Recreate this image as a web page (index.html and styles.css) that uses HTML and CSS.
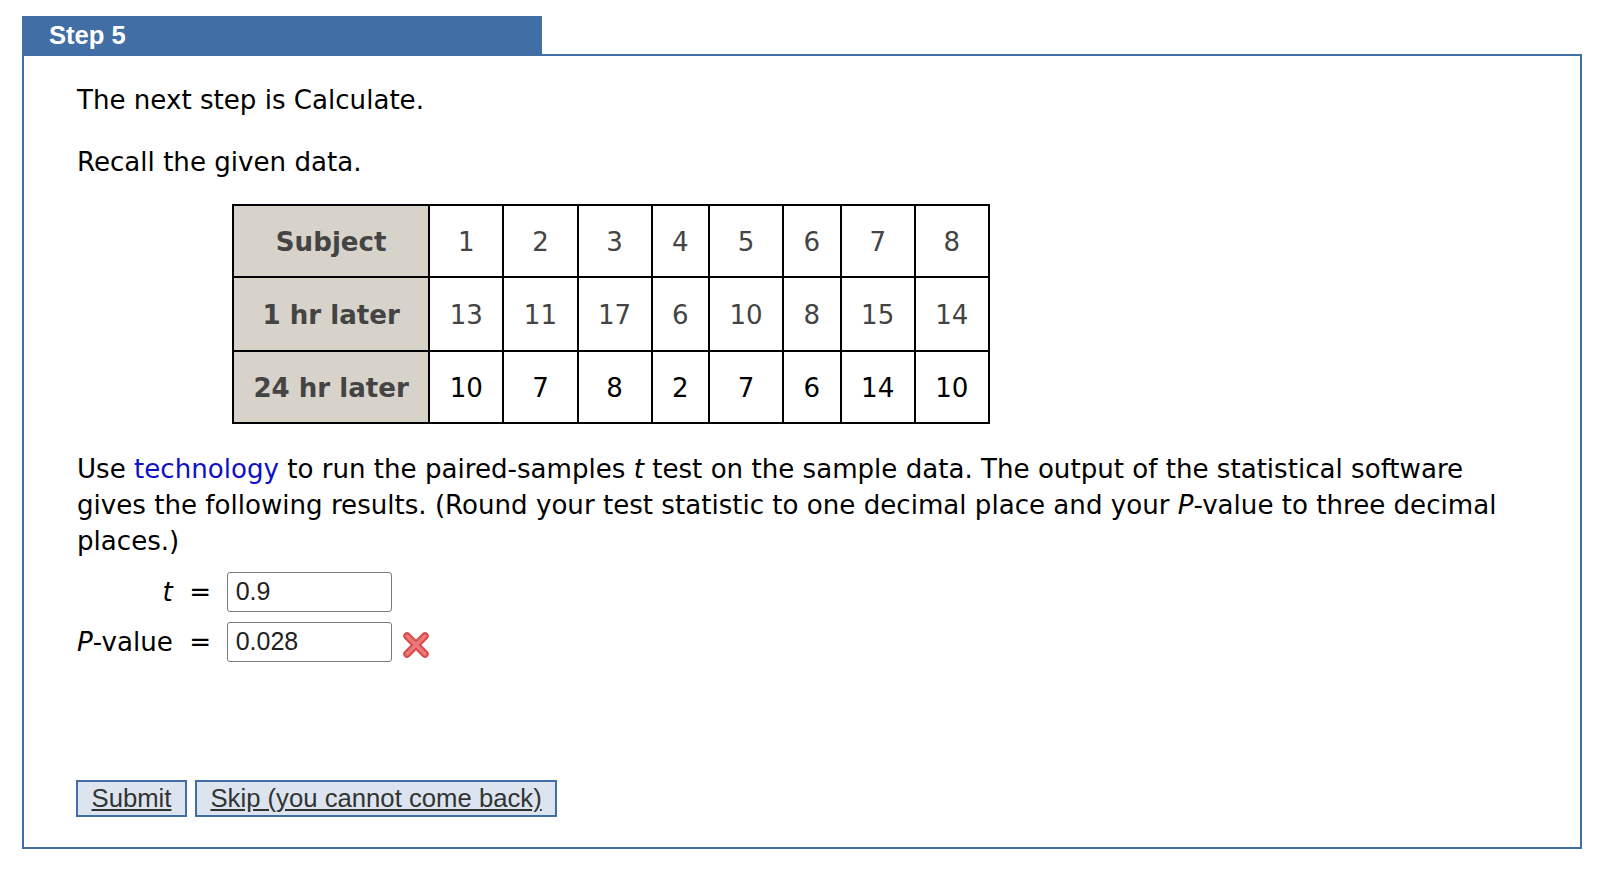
FILE: index.html
```html
<!DOCTYPE html>
<html lang="en">
<head>
<meta charset="utf-8">
<title>Step 5</title>
<link rel="stylesheet" href="styles.css">
</head>
<body>
<div class="page">
  <div class="step-header">Step 5</div>
  <div class="step-box">
    <p class="para first">The next step is Calculate.</p>
    <p class="para second">Recall the given data.</p>
    <table class="data">
      <tr class="r-gray">
        <th>Subject</th><td>1</td><td>2</td><td>3</td><td>4</td><td>5</td><td>6</td><td>7</td><td>8</td>
      </tr>
      <tr class="r-gray r-mid">
        <th>1 hr later</th><td>13</td><td>11</td><td>17</td><td>6</td><td>10</td><td>8</td><td>15</td><td>14</td>
      </tr>
      <tr class="r-black">
        <th>24 hr later</th><td>10</td><td>7</td><td>8</td><td>2</td><td>7</td><td>6</td><td>14</td><td>10</td>
      </tr>
    </table>
    <p class="para task">Use <a class="tech" href="#">technology</a> to run the paired-samples <i>t</i> test on the sample data. The output of the statistical software gives the following results. (Round your test statistic to one decimal place and your <i>P</i>-value to three decimal places.)</p>
    <div class="answers">
      <span class="lbl"><i>t</i></span>
      <span class="eq">=</span>
      <input class="ans" type="text" value="0.9">
      <span class="mark"></span>
      <span class="lbl"><i>P</i>-value</span>
      <span class="eq">=</span>
      <input class="ans" type="text" value="0.028">
      <span class="mark">
        <svg class="xmark" width="28" height="28" viewBox="0 0 28 28" aria-label="incorrect">
          <g stroke-linecap="round">
            <path d="M5 5 L23 23 M23 5 L5 23" stroke="#d94c4c" stroke-width="7.5"/>
            <path d="M5 5 L23 23 M23 5 L5 23" stroke="#ec7a7a" stroke-width="3.5"/>
          </g>
        </svg>
      </span>
    </div>
    <div class="buttons">
      <button class="btn" type="button">Submit</button>
      <button class="btn" type="button">Skip (you cannot come back)</button>
    </div>
  </div>
</div>
</body>
</html>
```

FILE: styles.css
```css
html, body {
  margin: 0;
  padding: 0;
  background: #ffffff;
}

.page {
  padding: 16px 0 0 22px;
  font-family: "DejaVu Sans", Verdana, sans-serif;
  font-size: 26.1px;
  line-height: 36px;
  color: #000;
}

.step-header {
  width: 493px;
  height: 38px;
  padding-left: 27px;
  background: #416ea5;
  color: #fff;
  font-family: "Liberation Sans", Arial, sans-serif;
  font-weight: bold;
  font-size: 25.6px;
  line-height: 38px;
}

.step-box {
  box-sizing: border-box;
  width: 1560px;
  border: 2px solid #416ea5;
  padding: 25.5px 52px 30px 53px;
}

.para {
  margin: 0 0 26px 0;
}

.second {
  margin-bottom: 24.5px;
}

.tech {
  color: #0f0fc8;
  text-decoration: none;
}

.data {
  border-collapse: collapse;
  margin: 0 0 27px 155px;
  color: #444;
}

.data th,
.data td {
  border: 2px solid #000;
  padding: 18.3px 19.45px 15.7px;
  text-align: center;
  line-height: 36px;
}

.data .r-mid th,
.data .r-mid td {
  padding-top: 19.3px;
  padding-bottom: 16.7px;
}

.data th {
  background: #d7d3ca;
  font-weight: bold;
  color: #444;
  padding-left: 19.4px;
  padding-right: 19.4px;
}

.data .r-black td {
  color: #000;
}

.task {
  margin: 0;
}

.answers {
  display: grid;
  grid-template-columns: auto auto auto auto;
  justify-content: start;
  align-items: center;
  row-gap: 10px;
  margin-top: 13px;
}

.lbl {
  text-align: right;
  padding-right: 16.5px;
}

.eq {
  padding-right: 15.5px;
}

.ans {
  box-sizing: border-box;
  width: 165px;
  height: 40px;
  margin: 0;
  border: 1px solid #7a7a7a;
  border-radius: 3px;
  padding: 0 8px;
  font-family: "Liberation Sans", Arial, sans-serif;
  font-size: 25px;
  color: #222;
  background: #fff;
}

.mark {
  display: flex;
  align-items: center;
  padding-left: 10px;
}

.xmark {
  display: block;
  margin-top: 6px;
}

.buttons {
  display: flex;
  gap: 8px;
  margin-top: 118px;
  margin-left: -1px;
}

.btn {
  margin: 0;
  border: 2px solid #416ea5;
  background: #dce5ef;
  padding: 2px 13.5px;
  font-family: "Liberation Sans", Arial, sans-serif;
  font-size: 25.7px;
  line-height: 29px;
  color: #333;
  text-decoration: underline;
  border-radius: 0;
}
```
